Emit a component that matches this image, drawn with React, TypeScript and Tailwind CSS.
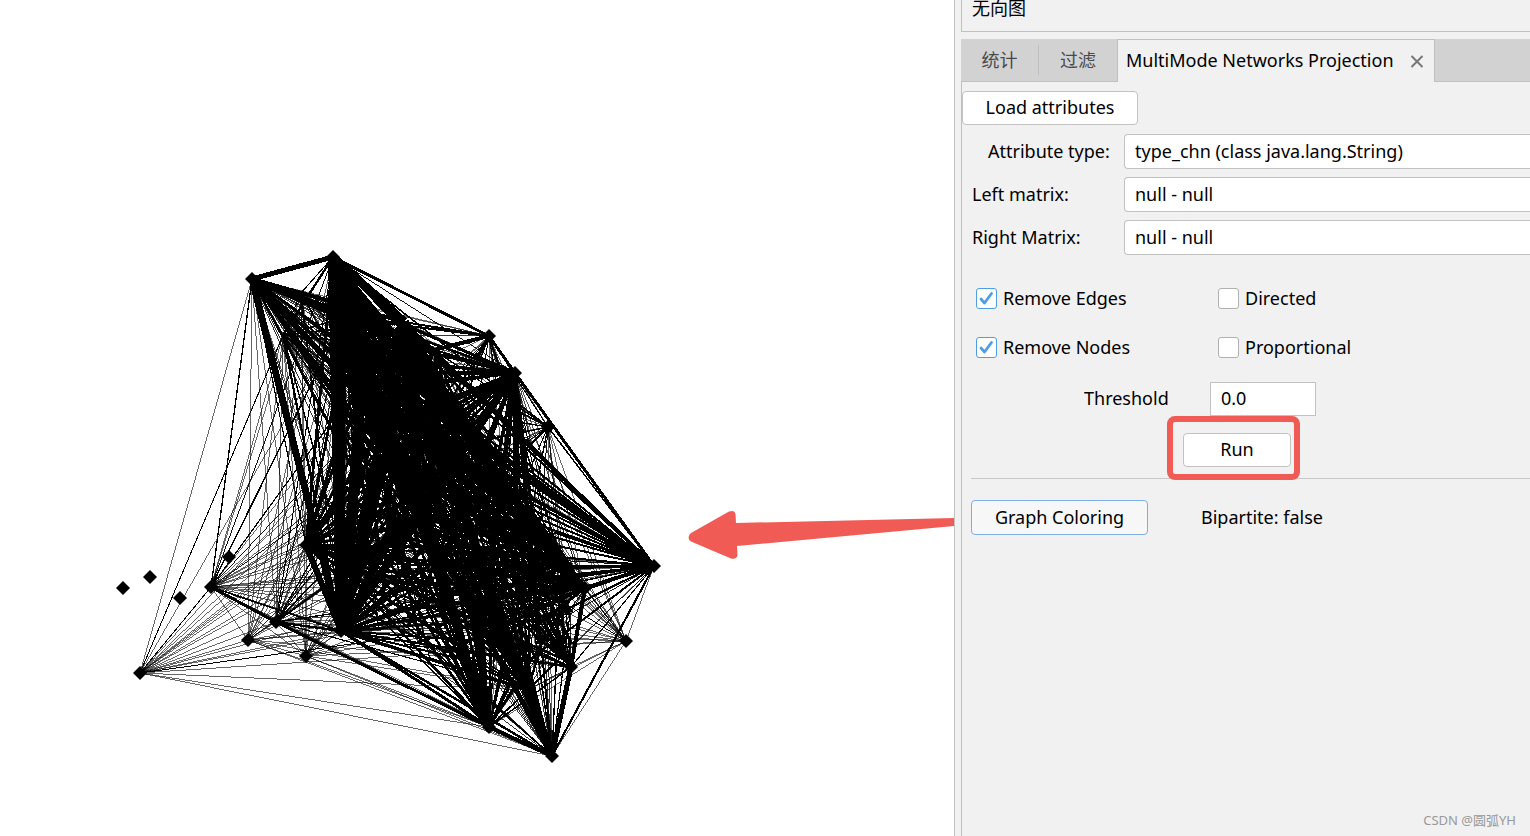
import { useState } from "react";
import type { ReactNode } from "react";

type GraphNode = { x: number; y: number; w: number };

const NODES: GraphNode[] = [
  { x: 252, y: 279, w: 8 },
  { x: 333, y: 257, w: 10 },
  { x: 489, y: 336, w: 5 },
  { x: 515, y: 373, w: 6 },
  { x: 548, y: 427, w: 4 },
  { x: 654, y: 566, w: 6 },
  { x: 626, y: 641, w: 2 },
  { x: 552, y: 756, w: 7 },
  { x: 489, y: 727, w: 6 },
  { x: 571, y: 667, w: 5 },
  { x: 585, y: 588, w: 5 },
  { x: 341, y: 631, w: 9 },
  { x: 276, y: 622, w: 4 },
  { x: 306, y: 656, w: 1 },
  { x: 248, y: 640, w: 1 },
  { x: 211, y: 587, w: 3 },
  { x: 306, y: 545, w: 5 },
  { x: 140, y: 673, w: 0 },
  { x: 301, y: 293, w: 3 },
  { x: 283, y: 335, w: 4 },
  { x: 344, y: 318, w: 9 },
  { x: 404, y: 322, w: 7 },
  { x: 434, y: 350, w: 5 },
  { x: 528, y: 690, w: 6 },
  { x: 570, y: 614, w: 3 },
  { x: 361, y: 396, w: 6 },
  { x: 471, y: 442, w: 7 },
  { x: 421, y: 516, w: 9 },
  { x: 516, y: 501, w: 5 },
  { x: 347, y: 573, w: 7 },
  { x: 561, y: 559, w: 6 },
  { x: 441, y: 450, w: 7 },
  { x: 385, y: 455, w: 6 },
];

const ISOLATED = [
  [123, 588],
  [150, 577],
  [180, 598],
  [229, 557],
];

const HEAVY: [number, number, number][] = [
  [0, 1, 5],
  [0, 11, 7],
  [0, 18, 4],
  [0, 20, 6],
  [0, 21, 4],
  [0, 25, 6],
  [1, 11, 10],
  [1, 21, 9],
  [1, 25, 12],
  [1, 2, 2],
  [2, 3, 3],
  [2, 21, 2],
  [2, 22, 4],
  [3, 5, 3],
  [3, 26, 5],
  [3, 28, 5],
  [5, 26, 4],
  [5, 10, 4],
  [7, 8, 4],
  [7, 9, 5],
  [7, 23, 8],
  [7, 27, 5],
  [8, 11, 3],
  [8, 27, 5],
  [9, 10, 4],
  [11, 16, 6],
  [12, 8, 3],
  [15, 12, 3],
  [11, 32, 10],
  [20, 27, 14],
  [20, 25, 14],
  [21, 26, 10],
  [25, 29, 10],
  [25, 27, 12],
  [26, 30, 8],
  [27, 29, 12],
  [27, 11, 8],
  [31, 23, 7],
  [31, 28, 10],
  [32, 27, 14],
  [20, 31, 13],
  [21, 27, 10],
  [28, 30, 8],
];

const HAIRLINE = 0.6;

function edgeWidth(i: number, j: number) {
  const a = NODES[i].w;
  const b = NODES[j].w;
  const low = Math.min(a, b);
  const noise = ((i * 37 + j * 61 + i * j * 13) % 17) / 17;
  if (low === 0) return a + b > 11 || a + b === 3 ? 1 : HAIRLINE;
  if (low === 1) return HAIRLINE;
  return Math.max(HAIRLINE, (a * b * noise) / 15);
}

function buildEdges() {
  const edges: { i: number; j: number; width: number }[] = [];
  for (let i = 0; i < NODES.length; i += 1) {
    for (let j = i + 1; j < NODES.length; j += 1) {
      const sparse = Math.min(NODES[i].w, NODES[j].w) <= 1;
      if (sparse && (i * 7 + j * 5) % 4 === 0) continue;
      edges.push({ i, j, width: edgeWidth(i, j) });
    }
  }
  HEAVY.forEach(([i, j, width]) => edges.push({ i, j, width }));
  return edges;
}

const EDGES = buildEdges();

type Strand = { x1: number; y1: number; x2: number; y2: number; width: number };

// Strands running from the hubs to points scattered over the dense core.
function buildStrands() {
  const strands: Strand[] = [];
  const hubs = [0, 1, 1, 3, 5, 7, 8, 9, 10, 11, 11, 16, 20, 21, 23, 29, 30];
  const count = 22;
  hubs.forEach((index, k) => {
    for (let n = 0; n < count; n += 1) {
      const across = ((n * 13 + k * 7) % count) / (count - 1);
      const y = 325 + (n / (count - 1)) * 335;
      const left = 338 + Math.max(0, y - 610) * 1.7;
      const right = Math.min(572, 405 + (y - 325) * 0.72);
      strands.push({
        x1: NODES[index].x,
        y1: NODES[index].y,
        x2: left + across * (right - left),
        y2: y,
        width: 0.8 + ((n * 5 + k * 3) % 5) * 0.6,
      });
    }
  });
  return strands;
}

const STRANDS = buildStrands();

function diamond(x: number, y: number) {
  return `M${x} ${y - 7}L${x + 7} ${y}L${x} ${y + 7}L${x - 7} ${y}Z`;
}

function NetworkGraph() {
  return (
    <svg viewBox="0 0 954 836" className="block w-full" role="img" aria-label="Network graph">
      <g stroke="#000" shapeRendering="crispEdges">
        {EDGES.map((e, k) => (
          <line
            key={k}
            x1={NODES[e.i].x}
            y1={NODES[e.i].y}
            x2={NODES[e.j].x}
            y2={NODES[e.j].y}
            strokeWidth={e.width}
          />
        ))}
        {STRANDS.map((s, k) => (
          <line key={k} x1={s.x1} y1={s.y1} x2={s.x2} y2={s.y2} strokeWidth={s.width} />
        ))}
      </g>
      <g fill="#000">
        {NODES.slice(0, 18).map((n, k) => (
          <path key={k} d={diamond(n.x, n.y)} />
        ))}
        {ISOLATED.map(([x, y], k) => (
          <path key={k} d={diamond(x, y)} />
        ))}
      </g>
      <path
        d="M954 518L736 523L735.500 514Q734.500 509.500 729 511.500L691 533Q686 537.500 691 541.500L731 558.500Q737 559.500 737.500 555L737 546L954 526Z"
        fill="#f15b55"
      />
    </svg>
  );
}

function Button({ children, className }: { children: ReactNode; className: string }) {
  return (
    <button type="button" className={`rounded border pb-0.5 text-center ${className}`}>
      {children}
    </button>
  );
}

function SelectRow({ id, label, option, indent }: { id: string; label: string; option: string; indent?: boolean }) {
  return (
    <div className="flex h-[35px] items-center">
      <label htmlFor={id} className={`w-[162px] shrink-0 pb-0.5 ${indent ? "pl-[26px]" : "pl-[10px]"}`}>
        {label}
      </label>
      <select
        id={id}
        className="h-full min-w-0 flex-1 appearance-none rounded-l border border-r-0 border-[#c2c2c2] bg-white px-[10px] pb-0.5"
      >
        <option>{option}</option>
      </select>
    </div>
  );
}

function Check({ label, initial }: { label: string; initial: boolean }) {
  const [checked, setChecked] = useState(initial);
  return (
    <label className="flex items-center gap-[6px]">
      <span className="grid size-[21px] shrink-0">
        <input
          type="checkbox"
          checked={checked}
          onChange={(e) => setChecked(e.target.checked)}
          className="col-start-1 row-start-1 size-[21px] appearance-none rounded-[3px] border border-[#b0b0b0] bg-white checked:border-[#4f9ee3]"
        />
        {checked && (
          <svg viewBox="0 0 21 21" className="pointer-events-none col-start-1 row-start-1 size-[21px]" aria-hidden="true">
            <path d="M5 11L8.500 15L15.500 5.500" fill="none" stroke="#4f9ee3" strokeWidth="2.800" strokeLinecap="round" strokeLinejoin="round" />
          </svg>
        )}
      </span>
      <span className="pb-0.5">{label}</span>
    </label>
  );
}

export default function App() {
  return (
    <div className="flex min-h-screen overflow-hidden bg-white font-['Noto_Sans','Noto_Sans_CJK_SC',sans-serif] text-[18px] leading-6 text-black">
      <main className="min-w-0 flex-1">
        <NetworkGraph />
      </main>

      <aside className="flex w-[576px] shrink-0 flex-col border-l border-[#c0c0c0] bg-[#f1f1f1] pl-[6px]">
        <section className="flex h-8 items-end border-b border-l border-[#c0c0c0] pb-[11px] pl-[10px]">
          <p>无向图</p>
        </section>

        <div role="tablist" className="mt-[7px] flex h-[43px] bg-[#d2d2d2] text-[#4a4a4a]">
          <div className="flex items-center border-b border-[#c0c0c0]">
            <button type="button" role="tab" aria-selected="false" className="h-[30px] w-[78px] border-r border-[#c0c0c0]">
              统计
            </button>
            <button type="button" role="tab" aria-selected="false" className="h-[30px] w-[78px]">
              过滤
            </button>
          </div>
          <div className="flex w-[318px] items-center justify-between border-x border-t border-[#c0c0c0] bg-[#f1f1f1] pr-[10px] pl-2 text-black">
            <button type="button" role="tab" aria-selected="true" className="pb-0.5 whitespace-nowrap">
              MultiMode Networks Projection
            </button>
            <button type="button" aria-label="Close tab">
              <svg viewBox="0 0 14 14" className="size-[14px]" aria-hidden="true">
                <path d="M1.500 2L12.500 13M12.500 2L1.500 13" stroke="#777" strokeWidth="2" />
              </svg>
            </button>
          </div>
          <div className="flex-1 border-b border-[#c0c0c0]" />
        </div>

        <div className="flex flex-1 flex-col border-l border-[#c0c0c0] pt-[9px]">
          <Button className="h-[34px] w-[176px] border-[#c2c2c2] bg-white">Load attributes</Button>

          <div className="mt-[9px] flex flex-col gap-2">
            <SelectRow id="attribute" label="Attribute type:" option="type_chn (class java.lang.String)" indent />
            <SelectRow id="left" label="Left matrix:" option="null - null" />
            <SelectRow id="right" label="Right Matrix:" option="null - null" />
          </div>

          <div className="mt-[19px] grid auto-rows-[49px] grid-cols-[242px_1fr] pl-[14px]">
            <Check label="Remove Edges" initial />
            <Check label="Directed" initial={false} />
            <Check label="Remove Nodes" initial />
            <Check label="Proportional" initial={false} />
          </div>

          <div className="mt-[10px] flex h-[34px] items-center pl-[122px]">
            <label htmlFor="threshold" className="w-[126px] pb-0.5">
              Threshold
            </label>
            <input
              id="threshold"
              type="text"
              defaultValue="0.0"
              className="h-full w-[106px] border border-[#c2c2c2] bg-white px-[10px] pb-0.5"
            />
          </div>

          <div className="mt-[17px] ml-[221px] w-[108px]">
            <div className="relative z-10 flex">
              <Button className="h-[34px] w-full border-[#c2c2c2] bg-white">Run</Button>
              <div className="pointer-events-none absolute -top-[17px] -right-[9px] -bottom-[13px] -left-4 rounded-lg border-[6px] border-[#f15b55]" />
            </div>
          </div>

          <hr className="mt-[11px] ml-[9px] border-[#c8c8c8]" />

          <div className="mt-[21px] flex items-center gap-[53px] pl-[9px]">
            <Button className="h-[35px] w-[177px] border-[#7faee0] bg-[#f7f7f7]">Graph Coloring</Button>
            <p className="pb-0.5">Bipartite: false</p>
          </div>

          <p className="mt-auto pr-[14px] pb-1 text-right text-[13px] text-[#999]">CSDN @圆弧YH</p>
        </div>
      </aside>
    </div>
  );
}
